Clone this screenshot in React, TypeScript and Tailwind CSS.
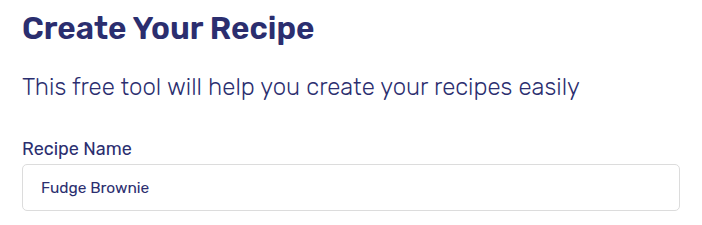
import * as React from "react";

export default function App() {
  return (
    <div className="min-h-screen bg-white px-[22px] pt-[10px] font-['Rubik','Inter','Noto_Sans',sans-serif] text-[#2b2e6f]">
      <h1 className="text-[31.5px] font-semibold leading-[38px]">Create Your Recipe</h1>
      <p className="mt-[24px] text-[24px] font-light leading-[30px]">
        This free tool will help you create your recipes easily
      </p>
      <div className="mt-[36px]">
        <label htmlFor="recipe-name" className="block text-[18px] leading-[22px]">
          Recipe Name
        </label>
        <input
          id="recipe-name"
          type="text"
          defaultValue="Fudge Brownie"
          className="mt-[4px] block h-[47px] w-full rounded-[5px] border border-[#dcdcdc] px-[18px] text-[15.5px] text-[#2b2e6f] outline-none"
        />
      </div>
    </div>
  );
}
